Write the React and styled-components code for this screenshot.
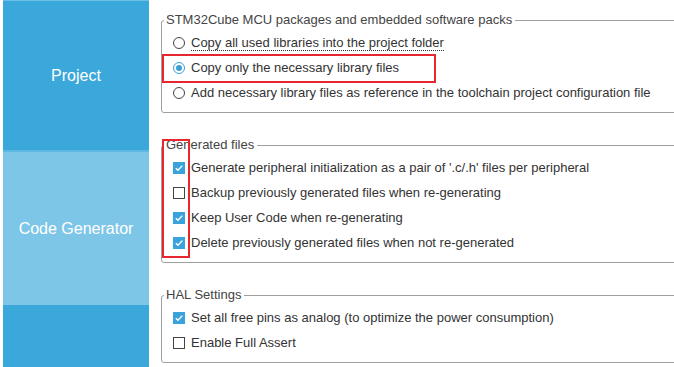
import React from 'react';
import styled, { createGlobalStyle } from 'styled-components';

const GlobalStyle = createGlobalStyle`
  html, body {
    margin: 0;
    padding: 0;
    background: #ffffff;
    overflow: hidden;
  }
  body {
    font-family: "Liberation Sans", Arial, sans-serif;
  }
`;

const Page = styled.div`
  display: flex;
  width: 674px;
  height: 367px;
  overflow: hidden;
`;

const Sidebar = styled.nav`
  display: flex;
  flex-direction: column;
  width: 146px;
  margin-left: 3px;
  background: #3aa8db;
  flex: none;
`;

const NavItem = styled.div`
  display: flex;
  align-items: center;
  justify-content: center;
  height: ${(p) => p.$height}px;
  box-sizing: border-box;
  border-top: ${(p) => (p.$active ? '2px solid #5db8e2' : '1px solid #6cc0e6')};
  background: ${(p) => (p.$active ? '#7ec6e8' : '#3aa8db')};
  color: #ffffff;
  font-size: 16px;
  font-weight: 300;
`;

const Content = styled.main`
  flex: none;
  width: 560px;
  padding-left: 12px;
  display: flex;
  flex-direction: column;
  gap: 24px;
  padding-top: 12px;
`;

const Group = styled.fieldset`
  position: relative;
  margin: 0;
  padding: 2px 0 7px 11px;
  border: 1px solid #a0a0a0;
  border-radius: 3px;
  min-width: 0;
`;

const Legend = styled.legend`
  margin-left: -9px;
  padding: 0 3px 0 2px;
  font-size: 13px;
  line-height: 16px;
  color: #444444;
`;

const Row = styled.div`
  position: relative;
  display: flex;
  align-items: center;
  gap: 6px;
  height: 25px;
  font-size: 13px;
  color: #333333;
`;

const Label = styled.span`
  line-height: 15px;
  border-bottom: 1px dotted ${(p) => (p.$focused ? '#333333' : 'transparent')};
  margin-top: 1px;
  white-space: nowrap;
`;

const Radio = styled.span`
  box-sizing: border-box;
  width: 12px;
  height: 12px;
  border-radius: 50%;
  border: 1px solid ${(p) => (p.$checked ? '#3a9fd8' : '#444444')};
  background: #ffffff;
  display: flex;
  align-items: center;
  justify-content: center;
  flex: none;

  &::after {
    content: '';
    width: 6px;
    height: 6px;
    border-radius: 50%;
    background: ${(p) => (p.$checked ? '#3a9fd8' : 'transparent')};
  }
`;

const Box = styled.span`
  box-sizing: border-box;
  width: 12px;
  height: 12px;
  border: 1px solid ${(p) => (p.$checked ? '#3aa3db' : '#444444')};
  background: ${(p) => (p.$checked ? '#3aa3db' : '#ffffff')};
  display: flex;
  align-items: center;
  justify-content: center;
  flex: none;
`;

// red annotation frames drawn over the dialog
const Mark = styled.div`
  position: absolute;
  border: 2px solid #e8262e;
  pointer-events: none;
`;

const RowMark = styled(Mark)`
  left: -11px;
  top: -1px;
  width: 270px;
  height: 25px;
`;

const ColumnMark = styled(Mark)`
  left: 0;
  top: -14px;
  width: 24px;
  height: 115px;
`;

const Check = ({ checked }) => (
  <Box $checked={checked}>
    {checked && (
      <svg width="10" height="10" viewBox="0 0 10 10">
        <path d="M1.8 5.2 L4 7.3 L8.3 2.6" fill="none" stroke="#fff" strokeWidth="1.4" />
      </svg>
    )}
  </Box>
);

const radios = [
  { text: 'Copy all used libraries into the project folder', focused: true },
  { text: 'Copy only the necessary library files', checked: true, marked: true },
  { text: 'Add necessary library files as reference in the toolchain project configuration file' },
];

const generated = [
  { text: "Generate peripheral initialization as a pair of '.c/.h' files per peripheral", checked: true },
  { text: 'Backup previously generated files when re-generating' },
  { text: 'Keep User Code when re-generating', checked: true },
  { text: 'Delete previously generated files when not re-generated', checked: true },
];

const hal = [
  { text: 'Set all free pins as analog (to optimize the power consumption)', checked: true },
  { text: 'Enable Full Assert' },
];

const App = () => (
  <Page>
    <GlobalStyle />
    <Sidebar>
      <NavItem $height={150}>Project</NavItem>
      <NavItem $height={155} $active>Code Generator</NavItem>
    </Sidebar>
    <Content>
      <Group>
        <Legend>STM32Cube MCU packages and embedded software packs</Legend>
        {radios.map((r) => (
          <Row key={r.text}>
            <Radio $checked={r.checked} />
            <Label $focused={r.focused}>{r.text}</Label>
            {r.marked && <RowMark />}
          </Row>
        ))}
      </Group>
      <Group>
        <Legend>Generated files</Legend>
        <ColumnMark />
        {generated.map((c) => (
          <Row key={c.text}>
            <Check checked={c.checked} />
            <Label>{c.text}</Label>
          </Row>
        ))}
      </Group>
      <Group>
        <Legend>HAL Settings</Legend>
        {hal.map((c) => (
          <Row key={c.text}>
            <Check checked={c.checked} />
            <Label>{c.text}</Label>
          </Row>
        ))}
      </Group>
    </Content>
  </Page>
);

export default App;
